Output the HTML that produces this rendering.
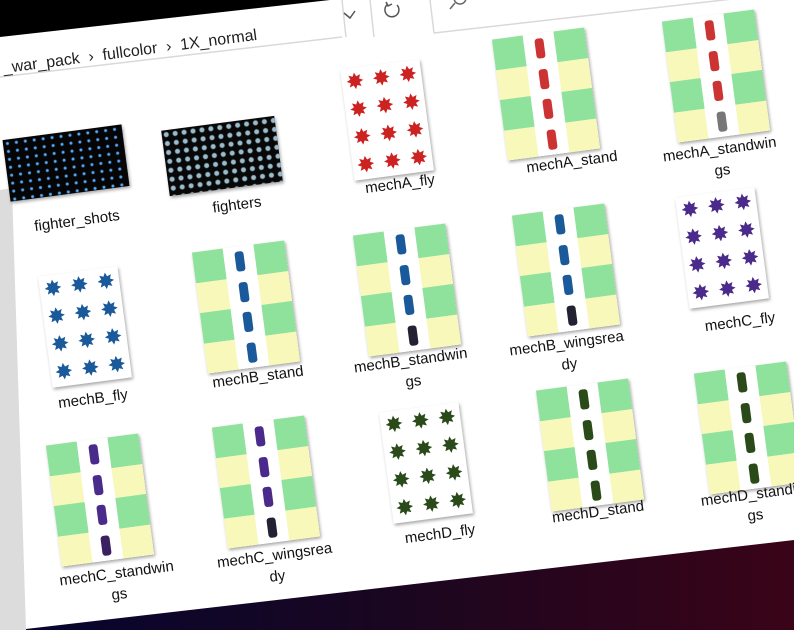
<!DOCTYPE html>
<html><head><meta charset="utf-8"><style>
html,body{margin:0;padding:0;width:794px;height:630px;overflow:hidden;background:#000;}
.abs{position:absolute;}
.t{position:absolute;transform:translate(-50%,-50%) rotate(-7.5deg);}
.lab{position:absolute;transform:translate(-50%,-50%) rotate(-7.5deg);font:15px "Liberation Sans",sans-serif;color:#111;white-space:nowrap;text-align:center;line-height:21px;}
.stand{width:93px;height:122px;display:grid;grid-template-columns:31px 31px 31px;grid-template-rows:repeat(4,30.5px);box-shadow:1px 2px 3px rgba(0,0,0,.35);}
.g{background:#8fe29c}.y{background:#f8f8ba}.w{background:#fff;display:flex;align-items:center;justify-content:center}
.fig{width:9px;height:20px;border-radius:3px}
.fly{width:80px;height:112px;background:#fff;box-shadow:1px 2px 3px rgba(0,0,0,.35);display:grid;grid-template-columns:repeat(3,1fr);grid-template-rows:repeat(4,1fr);align-items:center;justify-items:center;font-size:22px;line-height:1}
.blk{background:#050505;box-shadow:1px 2px 3px rgba(0,0,0,.35);}
</style></head><body>
<svg class="abs" style="left:0;top:0" width="794" height="630">
<defs><linearGradient id="bg" x1="0" y1="0" x2="1" y2="0"><stop offset="0" stop-color="#050530"/><stop offset=".5" stop-color="#1a0620"/><stop offset="1" stop-color="#3a0418"/></linearGradient></defs>
<rect width="794" height="630" fill="url(#bg)"/>
<rect width="400" height="40" fill="#000"/>
<polygon points="0,37 330,0 794,0 794,540 0,632" fill="#fff"/>
<polygon points="0,190 12,188 26,630 0,630" fill="#dcdcdc"/>
<line x1="0" y1="77" x2="342" y2="37" stroke="#d9d9d9" stroke-width="1.5"/>
<line x1="342" y1="0" x2="346" y2="37" stroke="#d9d9d9" stroke-width="1.5"/>
<line x1="370" y1="0" x2="374" y2="37" stroke="#d9d9d9" stroke-width="1.5"/>
<line x1="430" y1="0" x2="434" y2="33" stroke="#d9d9d9" stroke-width="1.5"/>
<line x1="434" y1="33" x2="794" y2="-8" stroke="#d9d9d9" stroke-width="1.5"/>
<path d="M344,13 l6,5 l5,-7" fill="none" stroke="#555" stroke-width="1.5"/>
<path d="M397,5 a7,7 0 1 1 -9,-1 M386,2 l2,4 l4,-2" fill="none" stroke="#555" stroke-width="1.5"/>
<circle cx="460" cy="-2" r="6" fill="none" stroke="#666" stroke-width="1.5"/>
<line x1="455" y1="3" x2="450" y2="9" stroke="#666" stroke-width="1.5"/>
</svg>
<div class="lab" style="left:130px;top:52px;font-size:16px;color:#222">_war_pack &nbsp;›&nbsp; fullcolor &nbsp;›&nbsp; 1X_normal</div>

<div class="t blk" style="left:66px;top:163px;width:120px;height:62px;background:
radial-gradient(circle,#5af 1px,transparent 2px) 0 0/9px 8px,#050505"></div>
<div class="t blk" style="left:222px;top:156px;width:114px;height:66px;background:
radial-gradient(circle,#9bc 2px,transparent 3px) 0 0/9px 9px,#080808"></div>

<div class="t fly" style="left:387px;top:120px;color:#c22"><span>✸</span><span>✸</span><span>✸</span><span>✸</span><span>✸</span><span>✸</span><span>✸</span><span>✸</span><span>✸</span><span>✸</span><span>✸</span><span>✸</span></div>
<div class="t fly" style="left:85px;top:327px;color:#1a5a9a"><span>✸</span><span>✸</span><span>✸</span><span>✸</span><span>✸</span><span>✸</span><span>✸</span><span>✸</span><span>✸</span><span>✸</span><span>✸</span><span>✸</span></div>
<div class="t fly" style="left:722px;top:248px;color:#4a2a8a"><span>✸</span><span>✸</span><span>✸</span><span>✸</span><span>✸</span><span>✸</span><span>✸</span><span>✸</span><span>✸</span><span>✸</span><span>✸</span><span>✸</span></div>
<div class="t fly" style="left:426px;top:463px;color:#2a4a1a"><span>✸</span><span>✸</span><span>✸</span><span>✸</span><span>✸</span><span>✸</span><span>✸</span><span>✸</span><span>✸</span><span>✸</span><span>✸</span><span>✸</span></div>

<div class="t stand" style="left:546px;top:94px"><div class="g"></div><div class="w"><div class="fig" style="background:#c33"></div></div><div class="g"></div><div class="y"></div><div class="w"><div class="fig" style="background:#c33"></div></div><div class="y"></div><div class="g"></div><div class="w"><div class="fig" style="background:#c33"></div></div><div class="g"></div><div class="y"></div><div class="w"><div class="fig" style="background:#c33"></div></div><div class="y"></div></div>
<div class="t stand" style="left:716px;top:76px"><div class="g"></div><div class="w"><div class="fig" style="background:#c33"></div></div><div class="g"></div><div class="y"></div><div class="w"><div class="fig" style="background:#c33"></div></div><div class="y"></div><div class="g"></div><div class="w"><div class="fig" style="background:#c33"></div></div><div class="g"></div><div class="y"></div><div class="w"><div class="fig" style="background:#777"></div></div><div class="y"></div></div>
<div class="t stand" style="left:246px;top:307px"><div class="g"></div><div class="w"><div class="fig" style="background:#1a5a9a"></div></div><div class="g"></div><div class="y"></div><div class="w"><div class="fig" style="background:#1a5a9a"></div></div><div class="y"></div><div class="g"></div><div class="w"><div class="fig" style="background:#1a5a9a"></div></div><div class="g"></div><div class="y"></div><div class="w"><div class="fig" style="background:#1a5a9a"></div></div><div class="y"></div></div>
<div class="t stand" style="left:407px;top:290px"><div class="g"></div><div class="w"><div class="fig" style="background:#1a5a9a"></div></div><div class="g"></div><div class="y"></div><div class="w"><div class="fig" style="background:#1a5a9a"></div></div><div class="y"></div><div class="g"></div><div class="w"><div class="fig" style="background:#1a5a9a"></div></div><div class="g"></div><div class="y"></div><div class="w"><div class="fig" style="background:#223"></div></div><div class="y"></div></div>
<div class="t stand" style="left:566px;top:270px"><div class="g"></div><div class="w"><div class="fig" style="background:#1a5a9a"></div></div><div class="g"></div><div class="y"></div><div class="w"><div class="fig" style="background:#1a5a9a"></div></div><div class="y"></div><div class="g"></div><div class="w"><div class="fig" style="background:#1a5a9a"></div></div><div class="g"></div><div class="y"></div><div class="w"><div class="fig" style="background:#223"></div></div><div class="y"></div></div>
<div class="t stand" style="left:100px;top:500px"><div class="g"></div><div class="w"><div class="fig" style="background:#4a2a8a"></div></div><div class="g"></div><div class="y"></div><div class="w"><div class="fig" style="background:#4a2a8a"></div></div><div class="y"></div><div class="g"></div><div class="w"><div class="fig" style="background:#4a2a8a"></div></div><div class="g"></div><div class="y"></div><div class="w"><div class="fig" style="background:#3a2060"></div></div><div class="y"></div></div>
<div class="t stand" style="left:266px;top:482px"><div class="g"></div><div class="w"><div class="fig" style="background:#4a2a8a"></div></div><div class="g"></div><div class="y"></div><div class="w"><div class="fig" style="background:#4a2a8a"></div></div><div class="y"></div><div class="g"></div><div class="w"><div class="fig" style="background:#4a2a8a"></div></div><div class="g"></div><div class="y"></div><div class="w"><div class="fig" style="background:#223"></div></div><div class="y"></div></div>
<div class="t stand" style="left:590px;top:445px"><div class="g"></div><div class="w"><div class="fig" style="background:#2a4a1a"></div></div><div class="g"></div><div class="y"></div><div class="w"><div class="fig" style="background:#2a4a1a"></div></div><div class="y"></div><div class="g"></div><div class="w"><div class="fig" style="background:#2a4a1a"></div></div><div class="g"></div><div class="y"></div><div class="w"><div class="fig" style="background:#2a4a1a"></div></div><div class="y"></div></div>
<div class="t stand" style="left:748px;top:428px"><div class="g"></div><div class="w"><div class="fig" style="background:#2a4a1a"></div></div><div class="g"></div><div class="y"></div><div class="w"><div class="fig" style="background:#2a4a1a"></div></div><div class="y"></div><div class="g"></div><div class="w"><div class="fig" style="background:#2a4a1a"></div></div><div class="g"></div><div class="y"></div><div class="w"><div class="fig" style="background:#2a4a1a"></div></div><div class="y"></div></div>

<div class="lab" style="left:77px;top:221px">fighter_shots</div>
<div class="lab" style="left:237px;top:205px">fighters</div>
<div class="lab" style="left:400px;top:184px">mechA_fly</div>
<div class="lab" style="left:572px;top:162px">mechA_stand</div>
<div class="lab" style="left:721px;top:160px">mechA_standwin<br>gs</div>
<div class="lab" style="left:93px;top:399px">mechB_fly</div>
<div class="lab" style="left:258px;top:377px">mechB_stand</div>
<div class="lab" style="left:412px;top:371px">mechB_standwin<br>gs</div>
<div class="lab" style="left:568px;top:354px">mechB_wingsrea<br>dy</div>
<div class="lab" style="left:740px;top:322px">mechC_fly</div>
<div class="lab" style="left:118px;top:584px">mechC_standwin<br>gs</div>
<div class="lab" style="left:276px;top:566px">mechC_wingsrea<br>dy</div>
<div class="lab" style="left:440px;top:534px">mechD_fly</div>
<div class="lab" style="left:598px;top:512px">mechD_stand</div>
<div class="lab" style="left:754px;top:505px">mechD_standin<br>gs</div>
</body></html>
